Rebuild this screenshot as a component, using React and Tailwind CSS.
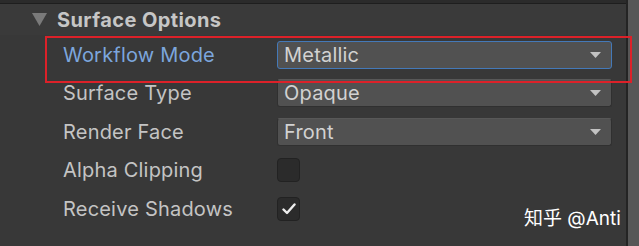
import React from "react";

const font = { fontFamily: "Inter, 'Noto Sans CJK SC', sans-serif" };

const Arrow = () => (
  <svg width="11" height="6" viewBox="0 0 11 6" className="ml-auto mr-[10px]">
    <polygon points="0,0 11,0 5.5,6" fill="#c2c2c2" />
  </svg>
);

const Dropdown = ({ value, active }) => (
  <div
    className={`w-[335px] h-[28px] rounded-[3px] bg-[#515151] flex items-center pl-[6px] text-[20px] tracking-[0.01em] text-[#d2d2d2] ${
      active ? "border-[1.5px] border-[#4479b8]" : "border border-[#303030] border-t-[#585858]"
    }`}
  >
    <span>{value}</span>
    <Arrow />
  </div>
);

const Checkbox = ({ checked }) => (
  <div className="w-[23px] h-[24px] rounded-[4px] bg-[#2b2b2b] border border-[#222222] flex items-center justify-center">
    {checked && (
      <svg width="14" height="12" viewBox="0 0 14 12">
        <path d="M1.5 6.5 L5 10 L12.5 1.5" stroke="#eeeeee" strokeWidth="2.4" fill="none" strokeLinecap="round" strokeLinejoin="round" />
      </svg>
    )}
  </div>
);

const Row = ({ label, highlight, children }) => (
  <div className="h-[38.5px] flex items-center">
    <div
      className={`w-[277px] pl-[63px] text-[20px] tracking-[0.01em] ${highlight ? "text-[#7ca6dd]" : "text-[#c4c4c4]"}`}
    >
      {label}
    </div>
    {children}
  </div>
);

export default function App() {
  return (
    <div className="relative w-[639px] h-[246px] bg-[#383838] flex overflow-hidden" style={font}>
      <div className="flex-1 flex flex-col">
        <div className="h-[4px] bg-[#2b2b2b] border-b border-[#1e1e1e]" />
        <div className="h-[31.25px] flex items-center pl-[32px] bg-[#3a3a3a]">
          <svg width="15" height="13" viewBox="0 0 15 13">
            <polygon points="0,0 15,0 7.5,13" fill="#7a7a7a" />
          </svg>
          <span className="ml-[10px] text-[20px] tracking-[0.02em] font-bold text-[#c6c6c6]">Surface Options</span>
        </div>
        <Row label="Workflow Mode" highlight>
          <Dropdown value="Metallic" active />
        </Row>
        <Row label="Surface Type">
          <Dropdown value="Opaque" />
        </Row>
        <Row label="Render Face">
          <Dropdown value="Front" />
        </Row>
        <Row label="Alpha Clipping">
          <Checkbox />
        </Row>
        <Row label="Receive Shadows">
          <Checkbox checked />
        </Row>
      </div>
      <div className="w-[2px] bg-[#242424]" />
      <div className="w-[11px] bg-[#575757]" />

      <div className="absolute left-[45px] top-[36px] w-[587px] h-[47px] border-2 border-[#dc2129]" />
      <div className="absolute left-[524px] top-[206px] text-[19px] text-white leading-[26px]">知乎 @Anti</div>
    </div>
  );
}
